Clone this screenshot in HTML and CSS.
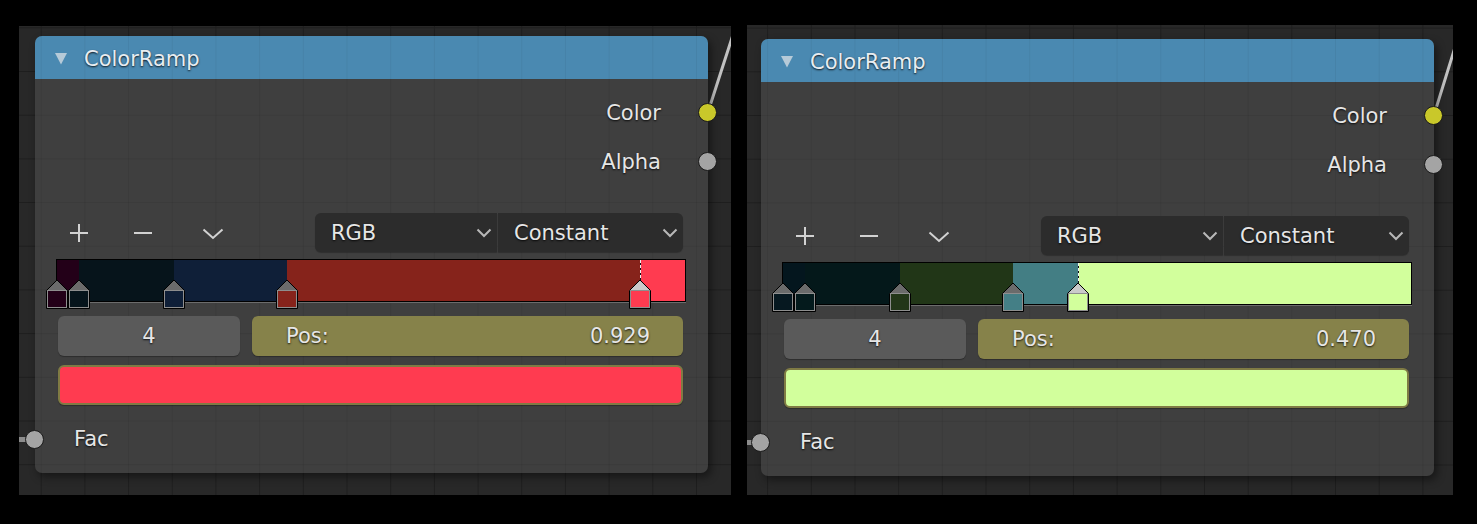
FILE: index.html
```html
<!DOCTYPE html>
<html>
<head>
<meta charset="utf-8">
<title>ColorRamp</title>
<link rel="stylesheet" href="styles.css">
</head>
<body>
<div class="stage">

  <!-- Left editor -->
  <div class="canvas canvas-a">
    <svg class="link" width="712" height="469" viewBox="0 0 712 469">
      <line x1="689" y1="86" x2="720" y2="-10" class="link-line"/>
    </svg>
    <div class="node node-a">
      <div class="node-header">
        <svg class="collapse" width="12" height="13" viewBox="0 0 12 13"><polygon points="0,1 12,1 6,12.5"/></svg>
        <span class="node-title">ColorRamp</span>
      </div>
      <div class="node-body">
        <div class="out-row"><span class="label">Color</span><i class="socket socket-color"></i></div>
        <div class="out-row"><span class="label">Alpha</span><i class="socket socket-gray"></i></div>

        <div class="toolbar">
          <svg class="tool tool-plus" width="20" height="20" viewBox="0 0 20 20"><path d="M10 1V19M1 10H19"/></svg>
          <svg class="tool tool-minus" width="20" height="20" viewBox="0 0 20 20"><path d="M1 10H19"/></svg>
          <svg class="tool tool-menu" width="22" height="12" viewBox="0 0 22 12"><polyline points="1.5,1.5 11,10 20.5,1.5"/></svg>
          <div class="dropdowns">
            <div class="dd dd-mode"><span>RGB</span><svg class="dd-arrow" width="16" height="10" viewBox="0 0 16 10"><polyline points="1.5,1.5 8,8 14.5,1.5"/></svg></div>
            <div class="dd dd-interp"><span>Constant</span><svg class="dd-arrow" width="16" height="10" viewBox="0 0 16 10"><polyline points="1.5,1.5 8,8 14.5,1.5"/></svg></div>
          </div>
        </div>

        <div class="ramp">
          <div class="ramp-bar">
            <div class="seg" style="flex-basis:22px;background:#230018"></div>
            <div class="seg" style="flex-basis:95px;background:#06141b"></div>
            <div class="seg" style="flex-basis:113px;background:#0f1f38"></div>
            <div class="seg" style="flex-basis:354px;background:#86231b"></div>
            <div class="seg" style="flex-basis:44px;background:#ff3b50"></div>
          </div>
          <svg class="stop" style="left:-10px" width="22" height="30" viewBox="0 0 22 30"><path class="stop-head" d="M0.5 11.5L11 1L21.5 11.5V29.5H0.5Z"/><rect class="stop-box" x="1.5" y="11.5" width="19" height="17" style="fill:#230018"/></svg>
          <svg class="stop" style="left:12px" width="22" height="30" viewBox="0 0 22 30"><path class="stop-head" d="M0.5 11.5L11 1L21.5 11.5V29.5H0.5Z"/><rect class="stop-box" x="1.5" y="11.5" width="19" height="17" style="fill:#06141b"/></svg>
          <svg class="stop" style="left:107px" width="22" height="30" viewBox="0 0 22 30"><path class="stop-head" d="M0.5 11.5L11 1L21.5 11.5V29.5H0.5Z"/><rect class="stop-box" x="1.5" y="11.5" width="19" height="17" style="fill:#0f1f38"/></svg>
          <svg class="stop" style="left:220px" width="22" height="30" viewBox="0 0 22 30"><path class="stop-head" d="M0.5 11.5L11 1L21.5 11.5V29.5H0.5Z"/><rect class="stop-box" x="1.5" y="11.5" width="19" height="17" style="fill:#86231b"/></svg>
          <div class="stop-dash" style="left:584px"></div>
          <svg class="stop stop-active" style="left:573px" width="22" height="30" viewBox="0 0 22 30"><path class="stop-head" d="M0.5 11.5L11 1L21.5 11.5V29.5H0.5Z"/><rect class="stop-box" x="1.5" y="11.5" width="19" height="17" style="fill:#ff3b50"/></svg>
        </div>

        <div class="fields">
          <div class="field num">4</div>
          <div class="field pos"><span>Pos:</span><span>0.929</span></div>
        </div>

        <div class="swatch" style="background:#ff3b50"></div>

        <div class="in-row"><i class="socket socket-gray socket-in"></i><span class="label">Fac</span></div>
      </div>
    </div>
  </div>

  <!-- Right editor -->
  <div class="canvas canvas-b">
    <svg class="link" width="706" height="470" viewBox="0 0 706 470">
      <line x1="687" y1="90" x2="718" y2="-10" class="link-line"/>
    </svg>
    <div class="node node-b">
      <div class="node-header">
        <svg class="collapse" width="12" height="13" viewBox="0 0 12 13"><polygon points="0,1 12,1 6,12.5"/></svg>
        <span class="node-title">ColorRamp</span>
      </div>
      <div class="node-body">
        <div class="out-row"><span class="label">Color</span><i class="socket socket-color"></i></div>
        <div class="out-row"><span class="label">Alpha</span><i class="socket socket-gray"></i></div>

        <div class="toolbar">
          <svg class="tool tool-plus" width="20" height="20" viewBox="0 0 20 20"><path d="M10 1V19M1 10H19"/></svg>
          <svg class="tool tool-minus" width="20" height="20" viewBox="0 0 20 20"><path d="M1 10H19"/></svg>
          <svg class="tool tool-menu" width="22" height="12" viewBox="0 0 22 12"><polyline points="1.5,1.5 11,10 20.5,1.5"/></svg>
          <div class="dropdowns">
            <div class="dd dd-mode"><span>RGB</span><svg class="dd-arrow" width="16" height="10" viewBox="0 0 16 10"><polyline points="1.5,1.5 8,8 14.5,1.5"/></svg></div>
            <div class="dd dd-interp"><span>Constant</span><svg class="dd-arrow" width="16" height="10" viewBox="0 0 16 10"><polyline points="1.5,1.5 8,8 14.5,1.5"/></svg></div>
          </div>
        </div>

        <div class="ramp">
          <div class="ramp-bar">
            <div class="seg" style="flex-basis:22px;background:#04161e"></div>
            <div class="seg" style="flex-basis:95px;background:#04181a"></div>
            <div class="seg" style="flex-basis:113px;background:#213617"></div>
            <div class="seg" style="flex-basis:65px;background:#437e84"></div>
            <div class="seg" style="flex-basis:333px;background:#d2ff9c"></div>
          </div>
          <svg class="stop" style="left:-10px" width="22" height="30" viewBox="0 0 22 30"><path class="stop-head" d="M0.5 11.5L11 1L21.5 11.5V29.5H0.5Z"/><rect class="stop-box" x="1.5" y="11.5" width="19" height="17" style="fill:#061820"/></svg>
          <svg class="stop" style="left:12px" width="22" height="30" viewBox="0 0 22 30"><path class="stop-head" d="M0.5 11.5L11 1L21.5 11.5V29.5H0.5Z"/><rect class="stop-box" x="1.5" y="11.5" width="19" height="17" style="fill:#041a1c"/></svg>
          <svg class="stop" style="left:107px" width="22" height="30" viewBox="0 0 22 30"><path class="stop-head" d="M0.5 11.5L11 1L21.5 11.5V29.5H0.5Z"/><rect class="stop-box" x="1.5" y="11.5" width="19" height="17" style="fill:#223618"/></svg>
          <svg class="stop" style="left:220px" width="22" height="30" viewBox="0 0 22 30"><path class="stop-head" d="M0.5 11.5L11 1L21.5 11.5V29.5H0.5Z"/><rect class="stop-box" x="1.5" y="11.5" width="19" height="17" style="fill:#447f86"/></svg>
          <div class="stop-dash" style="left:296px"></div>
          <svg class="stop stop-active" style="left:285px" width="22" height="30" viewBox="0 0 22 30"><path class="stop-head" d="M0.5 11.5L11 1L21.5 11.5V29.5H0.5Z"/><rect class="stop-box" x="1.5" y="11.5" width="19" height="17" style="fill:#d2ff9c"/></svg>
        </div>

        <div class="fields">
          <div class="field num">4</div>
          <div class="field pos"><span>Pos:</span><span>0.470</span></div>
        </div>

        <div class="swatch" style="background:#d2ff9c"></div>

        <div class="in-row"><i class="socket socket-gray socket-in"></i><span class="label">Fac</span></div>
      </div>
    </div>
  </div>

</div>
</body>
</html>
```

FILE: styles.css
```css
* { box-sizing: border-box; }

html, body {
  margin: 0;
  background: #000;
}

body {
  font-family: "DejaVu Sans", "Noto Sans", sans-serif;
  font-size: 21px;
  color: #e6e6e6;
}

.stage {
  display: flex;
  align-items: flex-start;
  gap: 16px;
  padding-left: 19px;
  width: 1477px;
  height: 524px;
}

/* node editor canvas */
.canvas {
  position: relative;
  z-index: 0;
  overflow: hidden;
  background-color: #282828;
  background-image:
    linear-gradient(to right, #1e1e1e 1px, transparent 1px),
    linear-gradient(to bottom, #1e1e1e 1px, transparent 1px);
  background-size: 43.7px 43.7px;
}

.canvas-a {
  margin-top: 26px;
  width: 712px;
  height: 469px;
  padding: 10px 0 0 16px;
  background-position: 21.7px 1.3px;
}

.canvas-b {
  margin-top: 25px;
  width: 706px;
  height: 470px;
  padding: 14px 0 0 14px;
  background-position: 20.1px 2.6px;
}

.link {
  position: absolute;
  left: 0;
  top: 0;
  pointer-events: none;
}

.link-line {
  stroke: #c2c2c2;
  stroke-width: 3;
  stroke-linecap: round;
}

/* node */
.node {
  position: relative;
  width: 673px;
  height: 437px;
  border-radius: 7px;
  background-color: #3f3f3f;
  background-image:
    linear-gradient(to right, rgba(0,0,0,0.07) 1px, transparent 1px),
    linear-gradient(to bottom, rgba(0,0,0,0.07) 1px, transparent 1px);
  background-size: 43.7px 43.7px;
  box-shadow: 3px 4px 8px rgba(0, 0, 0, 0.45);
  display: flex;
  flex-direction: column;
  text-shadow: 0 1px 2px rgba(0, 0, 0, 0.85);
}

.node-a { background-position: 5.7px 35px; }
.node-b { background-position: 6.1px 32.3px; }

.node-header {
  height: 43px;
  flex: 0 0 43px;
  display: flex;
  align-items: center;
  gap: 17px;
  padding: 2px 0 0 20px;
  border-radius: 7px 7px 0 0;
  background-color: #4a89b1;
  background-image: linear-gradient(to right, rgba(0,0,0,0.05) 1px, transparent 1px);
  background-size: 43.7px 43.7px;
  background-position: inherit;
  color: #e8edf1;
}

.collapse polygon { fill: #b6cad8; }

.node-body {
  display: flex;
  flex-direction: column;
  padding: 9px 25px 0 23px;
}

.out-row {
  position: relative;
  height: 49px;
  display: flex;
  justify-content: flex-end;
  align-items: center;
  padding-right: 22px;
}

.socket {
  position: absolute;
  top: 50%;
  width: 19px;
  height: 19px;
  margin-top: -9.5px;
  border-radius: 50%;
  border: 1px solid #1a1a1a;
}

.out-row .socket { right: -34px; }

.socket-color { background: #c9c82a; }
.socket-gray { background: #a4a4a4; }

.socket-in { left: -33px; }
.socket-in::before {
  content: "";
  position: absolute;
  right: 50%;
  top: 50%;
  margin-top: -2.5px;
  width: 30px;
  height: 5px;
  background: #8c8c8c;
  z-index: -1;
}

/* toolbar */
.toolbar {
  margin-top: 27px;
  height: 39px;
  display: flex;
  align-items: center;
}

.tool path, .tool polyline {
  fill: none;
  stroke: #d2d2d2;
  stroke-width: 2;
}

.tool-plus { margin-left: 11px; }
.tool-minus { margin-left: 44px; }
.tool-menu { margin-left: 49px; margin-top: 2px; }

.dropdowns {
  margin-left: auto;
  width: 368px;
  height: 39px;
  display: flex;
  gap: 1px;
}

.dd {
  height: 39px;
  display: flex;
  align-items: center;
  justify-content: space-between;
  padding: 0 5px 0 16px;
  background: #2c2c2c;
  box-shadow: 0 1px 1px rgba(0, 0, 0, 0.25);
}

.dd-mode { flex: 0 0 182px; border-radius: 6px 0 0 6px; }
.dd-interp { flex: 1; border-radius: 0 6px 6px 0; }

.dd-arrow polyline {
  fill: none;
  stroke: #b8b8b8;
  stroke-width: 2;
}

/* color ramp */
.ramp {
  position: relative;
  margin: 7px -3px 0 -2px;
  height: 43px;
}

.ramp-bar {
  height: 43px;
  display: flex;
  border: 1px solid #000;
  box-shadow: 0 1px 0 #6c6c6c;
}

.seg {
  flex-grow: 0;
  flex-shrink: 0;
}

.stop {
  position: absolute;
  top: 20px;
}

.stop-head {
  fill: #6b6b6b;
  stroke: #000;
  stroke-width: 1;
}

.stop-box {
  stroke: #8e8e8e;
  stroke-width: 1;
}

.stop-active .stop-head { fill: #cacaca; }

.stop-dash {
  position: absolute;
  top: 1px;
  width: 1px;
  height: 20px;
  background: repeating-linear-gradient(to bottom, #f0f0f0 0 3px, #111 3px 5px);
}

/* fields */
.fields {
  margin-top: 14px;
  height: 40px;
  display: flex;
  gap: 12px;
}

.field {
  height: 40px;
  border-radius: 6px;
  display: flex;
  align-items: center;
  box-shadow: 0 1px 1px rgba(0, 0, 0, 0.3);
}

.num {
  flex: 0 0 182px;
  justify-content: center;
  background: #5a5a5a;
}

.pos {
  flex: 1;
  justify-content: space-between;
  padding: 0 33px 0 34px;
  background: #86824a;
}

.swatch {
  margin-top: 9px;
  height: 40px;
  border: 2px solid #7f7b44;
  border-radius: 6px;
  box-shadow: 0 1px 1px rgba(0, 0, 0, 0.3);
}

.in-row {
  position: relative;
  height: 68px;
  display: flex;
  align-items: center;
  padding-left: 16px;
}
```
